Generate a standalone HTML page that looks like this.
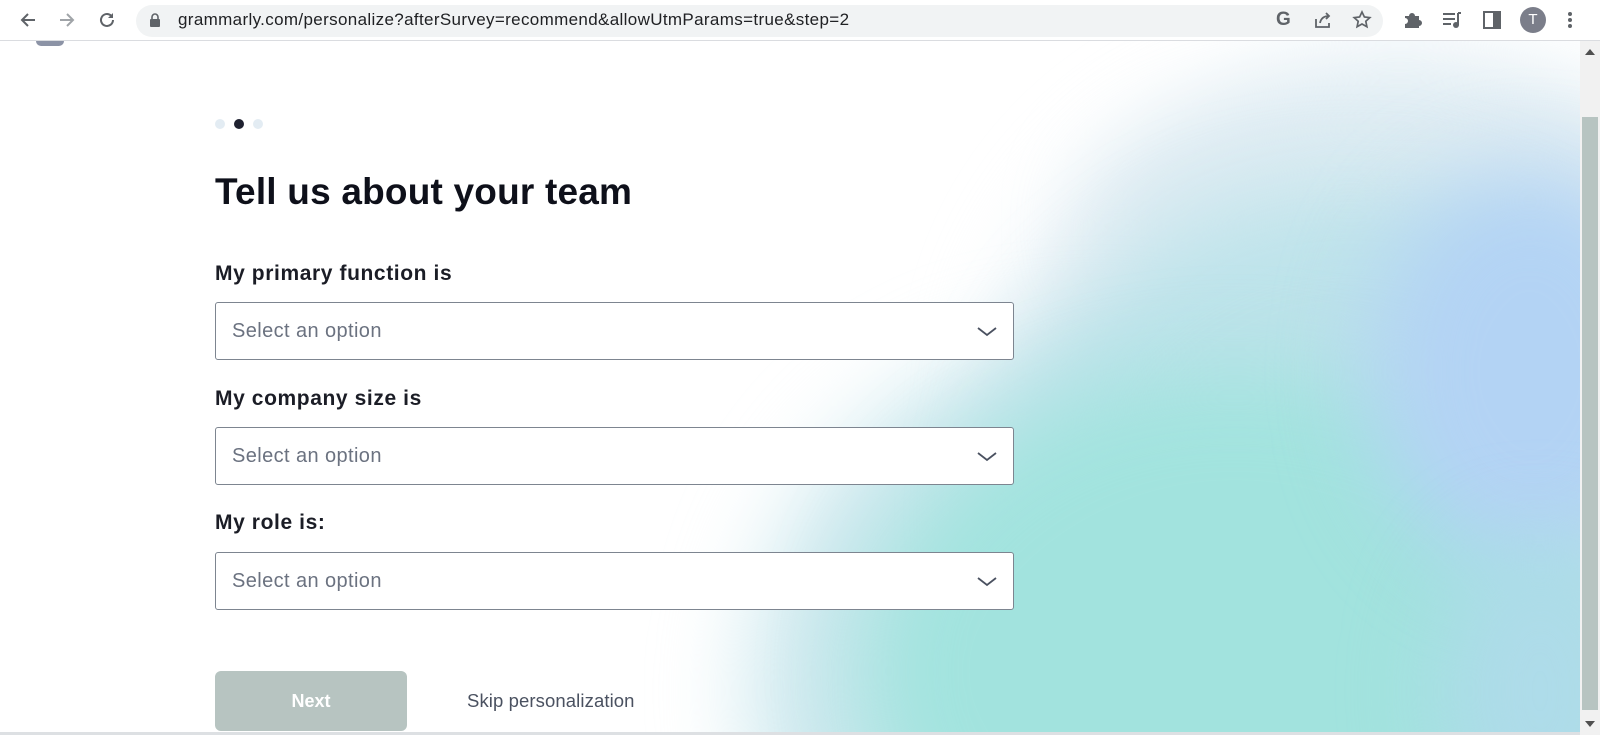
<!DOCTYPE html>
<html><head><meta charset="utf-8"><style>
*{margin:0;padding:0;box-sizing:border-box}
html,body{width:1600px;height:735px;overflow:hidden;background:#fff;font-family:"Liberation Sans",sans-serif}
.top{position:absolute;left:0;top:0;width:1600px;height:41px;background:#fff;border-bottom:1px solid #dadce0;z-index:5}
.pill{position:absolute;left:136px;top:5px;width:1247px;height:32px;border-radius:16px;background:#f1f3f4}
.url{position:absolute;left:178px;top:10px;font-size:17px;color:#202124;letter-spacing:0.35px}
.ic{position:absolute;top:9px}
.bg{position:absolute;left:0;top:41px;width:1580px;height:694px;overflow:hidden}
.blob{position:absolute;filter:blur(45px);border-radius:50%}
.sb{position:absolute;left:1580px;top:41px;width:20px;height:694px;background:#f1f1f1;z-index:4}
.thumb{position:absolute;left:2px;top:76px;width:16px;height:593px;background:#b7c4c1}
.dot{position:absolute;top:119px;width:10px;height:10px;border-radius:50%;background:#e3ecf3}
h1{position:absolute;left:215px;top:171px;font-size:37px;font-weight:700;color:#0e101a;letter-spacing:0.2px}
.lab{position:absolute;left:215px;font-size:21px;font-weight:700;color:#1b1d26;letter-spacing:0.6px}
.box{position:absolute;left:215px;width:799px;height:58px;border:1px solid #7d8590;border-radius:3px;background:#fff}
.box span{position:absolute;left:16px;top:17px;font-size:20px;color:#6b7280;letter-spacing:0.4px}
.box svg{position:absolute;right:16px;top:24px}
.next{position:absolute;left:215px;top:671px;width:192px;height:60px;border-radius:6px;background:#b7c4c1;color:#fff;font-weight:700;font-size:18px;text-align:center;line-height:60px}
.skip{position:absolute;left:467px;top:690px;font-size:18.5px;color:#4a5160;letter-spacing:0.1px}
</style></head><body>
<div class="bg">
  <div class="blob" style="left:1000px;top:20px;width:800px;height:700px;background:#e4eff5"></div>
  <div class="blob" style="left:1100px;top:60px;width:600px;height:250px;background:#dcebf2"></div>
  <div class="blob" style="left:750px;top:300px;width:700px;height:700px;background:#cce8ee"></div>
  <div class="blob" style="left:1000px;top:150px;width:700px;height:650px;background:#bde3ea"></div>
  <div class="blob" style="left:860px;top:330px;width:750px;height:600px;background:#a2e3de"></div>
  <div class="blob" style="left:1370px;top:130px;width:320px;height:400px;background:#b3d3f4"></div>
  <div class="blob" style="left:1440px;top:500px;width:200px;height:300px;background:#aedbe9"></div>
</div>
<div class="top">
  <svg class="ic" style="left:17px;top:9px" width="22" height="22" viewBox="0 0 22 22"><path d="M18 11H5M11 5l-6 6 6 6" stroke="#5f6368" stroke-width="2" fill="none"/></svg>
  <svg class="ic" style="left:56px" width="22" height="22" viewBox="0 0 22 22"><path d="M4 11h13M11 5l6 6-6 6" stroke="#a0a4a8" stroke-width="2" fill="none"/></svg>
  <svg class="ic" style="left:96px" width="22" height="22" viewBox="0 0 22 22"><path d="M17 11a6 6 0 1 1-2-4.5" stroke="#5f6368" stroke-width="2" fill="none"/><path d="M17 4v5h-5z" fill="#5f6368"/></svg>
  <div class="pill"></div>
  <svg class="ic" style="left:149px;top:13px" width="12" height="14" viewBox="0 0 12 14"><rect x="1" y="6" width="10" height="8" rx="1" fill="#5f6368"/><path d="M3 6V4a3 3 0 0 1 6 0v2" stroke="#5f6368" stroke-width="1.6" fill="none"/></svg>
  <div class="url">grammarly.com/personalize?afterSurvey=recommend&amp;allowUtmParams=true&amp;step=2</div>
  <div style="position:absolute;left:1276px;top:9px;font-size:19px;font-weight:700;color:#5f6368">G</div>
  <svg class="ic" style="left:1312px" width="22" height="22" viewBox="0 0 22 22"><path d="M4 10v8h13v-4M8 14c1-5 4-7 9-7M14 4l3 3-3 3" stroke="#5f6368" stroke-width="1.8" fill="none"/></svg>
  <svg class="ic" style="left:1351px" width="22" height="22" viewBox="0 0 22 22"><path d="M11 3l2.4 5 5.4.6-4 3.7 1.1 5.4L11 15l-4.9 2.7 1.1-5.4-4-3.7 5.4-.6z" stroke="#5f6368" stroke-width="1.7" fill="none"/></svg>
  <svg class="ic" style="left:1401px" width="22" height="22" viewBox="0 0 22 22"><path d="M4 7h4a3 3 0 0 1 6 0h4v4a3 3 0 0 1 0 6v2H4v-4a3 3 0 0 0 0-6z" fill="#5f6368"/></svg>
  <svg class="ic" style="left:1441px" width="22" height="22" viewBox="0 0 22 22"><path d="M2 5h12M2 10h12M2 15h8" stroke="#5f6368" stroke-width="2"/><path d="M17 4v12" stroke="#5f6368" stroke-width="2"/><circle cx="15" cy="16" r="3" fill="#5f6368"/><path d="M17 4h3" stroke="#5f6368" stroke-width="2"/></svg>
  <svg class="ic" style="left:1481px" width="22" height="22" viewBox="0 0 22 22"><rect x="3" y="3" width="16" height="16" fill="none" stroke="#5f6368" stroke-width="2"/><rect x="12" y="3" width="7" height="16" fill="#5f6368"/></svg>
  <div style="position:absolute;left:1520px;top:7px;width:26px;height:26px;border-radius:50%;background:#7b7e8a;color:#fff;font-size:15px;text-align:center;line-height:26px">T</div>
  <svg class="ic" style="left:1565px" width="10" height="22" viewBox="0 0 10 22"><circle cx="5" cy="5" r="2" fill="#5f6368"/><circle cx="5" cy="11" r="2" fill="#5f6368"/><circle cx="5" cy="17" r="2" fill="#5f6368"/></svg>
</div>
<div style="position:absolute;left:36px;top:41px;width:28px;height:5px;border-radius:0 0 14px 14px;background:#8c93a6;z-index:6"></div>
<div class="sb"><svg style="position:absolute;left:5px;top:8px" width="10" height="6"><path d="M0 6L5 0l5 6z" fill="#505050"/></svg><div class="thumb"></div><svg style="position:absolute;left:5px;top:680px" width="10" height="6"><path d="M0 0l5 6 5-6z" fill="#505050"/></svg></div>
<div class="dot" style="left:215px"></div>
<div class="dot" style="left:234px;background:#1f2130"></div>
<div class="dot" style="left:253px"></div>
<h1>Tell us about your team</h1>
<div class="lab" style="top:262px">My primary function is</div>
<div class="box" style="top:302px"><span>Select an option</span><svg width="20" height="10" viewBox="0 0 20 10"><path d="M1 1l9 7 9-7" stroke="#4a5160" stroke-width="1.8" fill="none"/></svg></div>
<div class="lab" style="top:387px">My company size is</div>
<div class="box" style="top:427px"><span>Select an option</span><svg width="20" height="10" viewBox="0 0 20 10"><path d="M1 1l9 7 9-7" stroke="#4a5160" stroke-width="1.8" fill="none"/></svg></div>
<div class="lab" style="top:511px">My role is:</div>
<div class="box" style="top:552px"><span>Select an option</span><svg width="20" height="10" viewBox="0 0 20 10"><path d="M1 1l9 7 9-7" stroke="#4a5160" stroke-width="1.8" fill="none"/></svg></div>
<div class="next">Next</div>
<div class="skip">Skip personalization</div>
<div style="position:absolute;left:0;top:732px;width:1600px;height:3px;background:#dde0e3"></div>
</body></html>
